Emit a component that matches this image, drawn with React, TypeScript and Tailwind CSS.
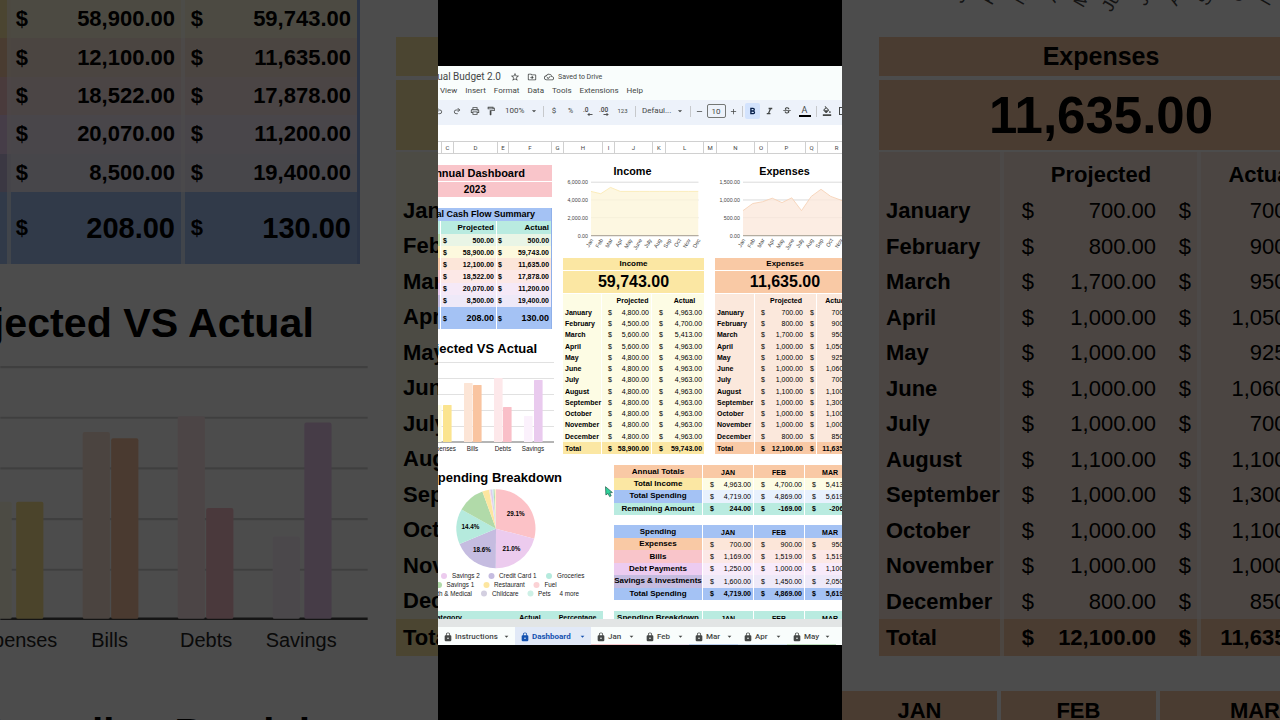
import { Redo2, Undo2 } from 'lucide-react'
import {
  MdAdd, MdArrowDropDown, MdFormatBold, MdFormatColorFill, MdFormatItalic, MdLock, MdOutlineCloudDone,
  MdOutlineDriveFileMove, MdOutlineFormatPaint, MdOutlinePrint, MdRemove, MdStarBorder, MdStrikethroughS,
} from 'react-icons/md'
import clsx from 'clsx'
import type { ReactNode } from 'react'

type Size = 'sm' | 'lg'

const MONTHS = ['January', 'February', 'March', 'April', 'May', 'June', 'July', 'August', 'September', 'October', 'November', 'December']
const SHORT = ['Jan', 'Feb', 'Mar', 'Apr', 'May', 'June', 'July', 'Aug', 'Sep', 'Oct', 'Nov', 'Dec']

const money = (n: number) => n.toLocaleString('en-US', { minimumFractionDigits: 2, maximumFractionDigits: 2 })

interface Ledger {
  title: string
  strong: string
  light: string
  projected: number[]
  actual: number[]
  cols: Record<Size, string[]>
  // column after which the second white divider is drawn
  divider: number
}

const income: Ledger = {
  title: 'Income',
  strong: 'bg-[#fbe7a3]',
  light: 'bg-[#fdfce4]',
  projected: [4800, 4500, 5600, 5600, 4800, 4800, 4800, 4800, 4800, 4800, 4800, 4800],
  actual: [4963, 4700, 5413, 4963, 4963, 4963, 4963, 4963, 4963, 4963, 4963, 4963],
  cols: {
    sm: ['w-[39px]', 'w-[12px]', 'w-[38px]', 'w-[13px]', 'w-[39px]'],
    lg: ['w-[125px]', 'w-[36px]', 'w-[122px]', 'w-[39px]', 'w-[122px]'],
  },
  divider: 2,
}

const expenses: Ledger = {
  title: 'Expenses',
  strong: 'bg-[#f9c9a5]',
  light: 'bg-[#fbe8dc]',
  projected: [700, 800, 1700, 1000, 1000, 1000, 1000, 1100, 1000, 1000, 1000, 800],
  actual: [700, 900, 950, 1050, 925, 1060, 700, 1100, 1300, 1100, 1000, 850],
  cols: {
    sm: ['w-[40px]', 'w-[12px]', 'w-[38px]', 'w-[12px]', 'w-[38px]'],
    lg: ['w-[125px]', 'w-[36px]', 'w-[122px]', 'w-[39px]', 'w-[122px]'],
  },
  divider: 3,
}

const ledgerSizes = {
  sm: {
    table: 'text-[7px]', title: 'h-[13px] text-[8px] border-b', total: 'h-[23px] text-[16px] border-b',
    head: 'h-[13px]', row: 'h-[11px] nth-[4n]:h-[12px]', foot: 'h-[12px]', headText: '',
    name: 'pl-[2px]', amount: 'pr-[2px]', divider: 'border-r border-white',
  },
  lg: {
    table: 'text-[22px]', title: 'h-[43px] text-[25px] border-b-4', total: 'h-[72px] text-[51px] border-b-2',
    head: 'h-[41px]', row: 'h-[36px] even:h-[35px]', foot: 'h-[37px]', headText: 'pt-1',
    name: 'pl-[7px]', amount: 'pr-[6px]', divider: 'border-r-4 border-white/60',
  },
}

const sum = (list: number[]) => list.reduce((a, b) => a + b, 0)

function LedgerTable({ data, size }: { data: Ledger; size: Size }) {
  const s = ledgerSizes[size]
  const line = (i: number) => (i === 0 || i === data.divider) && s.divider

  const cells = (a: number, b: number) =>
    ['$', money(a), '$', money(b)].map((text, i) => (
      <td key={i} className={clsx('text-right', s.amount, line(i + 1))}>{text}</td>
    ))

  return (
    <table className={clsx('table-fixed border-separate border-spacing-0 w-0 leading-none whitespace-nowrap', s.table)}>
      <colgroup>{data.cols[size].map((w, i) => <col key={i} className={w} />)}</colgroup>
      <thead className={data.light}>
        <tr className={data.strong}><th colSpan={5} className={clsx('border-white', s.title)}>{data.title}</th></tr>
        <tr className={data.strong}><th colSpan={5} className={clsx('border-white', s.total)}>{money(sum(data.actual))}</th></tr>
        <tr className={s.head}>
          <th className={clsx(line(0))} />
          <th />
          <th className={clsx(s.headText, line(2))}>Projected</th>
          <th className={clsx(line(3))} />
          <th className={s.headText}>Actual</th>
        </tr>
      </thead>
      <tbody className={data.light}>
        {MONTHS.map((m, i) => (
          <tr key={m} className={s.row}>
            <th className={clsx('text-left', s.name, line(0))}>{m}</th>
            {cells(data.projected[i], data.actual[i])}
          </tr>
        ))}
      </tbody>
      <tfoot className={clsx('font-bold', data.strong)}>
        <tr className={s.foot}>
          <th className={clsx('text-left', s.name, line(0))}>Total</th>
          {cells(sum(data.projected), sum(data.actual))}
        </tr>
      </tfoot>
    </table>
  )
}

// only the leading column of a large ledger, for the narrow strip at the panel's edge
function LedgerNames({ data }: { data: Ledger }) {
  const s = ledgerSizes.lg
  return (
    <ul className={clsx('font-bold leading-none', data.light, s.table)}>
      <li className={clsx('border-white', s.title, data.strong)} />
      <li className={clsx('border-white mb-[41px]', s.total, data.strong)} />
      {MONTHS.map((m) => <li key={m} className="h-[36px] odd:h-[35px] pl-[7px] flex items-center">{m}</li>)}
      <li className={clsx('h-[37px] pl-[7px] flex items-center', data.strong)}>Total</li>
    </ul>
  )
}

const cashFlow = [
  { projected: 500, actual: 500, tag: 'bg-[#b6dba8]', row: 'bg-[#e9f5e6]' },
  { projected: 58900, actual: 59743, tag: 'bg-[#fbe7a3]', row: 'bg-[#fdf9de]' },
  { projected: 12100, actual: 11635, tag: 'bg-[#f9c9a5]', row: 'bg-[#fce6d9]' },
  { projected: 18522, actual: 17878, tag: 'bg-[#f9c5ca]', row: 'bg-[#fce8e6]' },
  { projected: 20070, actual: 11200, tag: 'bg-[#eccbf0]', row: 'bg-[#f5e9f7]' },
  { projected: 8500, actual: 19400, tag: 'bg-[#c5bce0]', row: 'bg-[#eee9f8]' },
]

const flowSizes = {
  sm: {
    table: 'h-[121px] text-[7px] border-r', cols: ['w-[3px]', 'w-[6px]', 'w-[50px]', 'w-[5px]', 'w-[49px]'],
    foot: 'h-[22px]', total: 'text-[9px]', pad: 'pr-[2px]', divider: 'border-r border-white',
  },
  lg: {
    table: 'h-[264px] text-[22px] border-r-[3px]', cols: ['w-[11px]', 'w-[17px]', 'w-[157px]', 'w-[18px]', 'w-[154px]'],
    foot: 'h-[72px]', total: 'text-[29px]', pad: 'pr-[6px]', divider: 'border-r-4 border-white/60',
  },
}

function CashFlowTable({ size }: { size: Size }) {
  const s = flowSizes[size]
  const rows = size === 'sm' ? cashFlow : cashFlow.slice(1)
  return (
    <table className={clsx('table-fixed border-separate border-spacing-0 w-0 leading-none whitespace-nowrap font-bold text-right border-[#8fb0ea]', s.table)}>
      <colgroup>{s.cols.map((w, i) => <col key={i} className={w} />)}</colgroup>
      {size === 'sm' && (
        <thead>
          <tr className="h-[13px] bg-[#a4c2f4] text-[9px]">
            <th colSpan={5}><div className="flex justify-end pr-4">Annual Cash Flow Summary</div></th>
          </tr>
          <tr className="h-[13px] bg-[#b9ebe0] text-[8px]">
            <th className={s.divider} />
            <th colSpan={2} className={clsx('text-right', s.pad, s.divider)}>Projected</th>
            <th colSpan={2} className={clsx('text-right', s.pad)}>Actual</th>
          </tr>
        </thead>
      )}
      <tbody>
        {rows.map((r) => (
          <tr key={r.projected} className={r.row}>
            <td className={clsx(r.tag, s.divider)} />
            <td>$</td>
            <td className={clsx(s.pad, s.divider)}>{money(r.projected)}</td>
            <td>$</td>
            <td className={s.pad}>{money(r.actual)}</td>
          </tr>
        ))}
      </tbody>
      <tfoot className="bg-[#a4c2f4]">
        <tr className={s.foot}>
          <td className={s.divider} />
          <td>$</td>
          <td className={clsx(s.total, s.pad, s.divider)}>208.00</td>
          <td>$</td>
          <td className={clsx(s.total, s.pad)}>130.00</td>
        </tr>
      </tfoot>
    </table>
  )
}

const bars = [
  { x: -5, top: 76, fill: '#fdfce4' }, { x: 5, top: 76, fill: '#fbe48f' },
  { x: 26, top: 54, fill: '#fce5d6' }, { x: 35, top: 56, fill: '#f9c4a0' },
  { x: 56, top: 49, fill: '#fde8ea' }, { x: 65, top: 78, fill: '#f9bfc8' },
  { x: 86, top: 87, fill: '#fbf1fc' }, { x: 96, top: 51, fill: '#e9caee' },
]

function ProjectedChart({ className }: { className: string }) {
  return (
    <svg viewBox="0 0 116 126" className={className} role="img" aria-label="Projected VS Actual">
      <text x="99" y="24" textAnchor="end" fontSize="13" fontWeight="700">Projected VS Actual</text>
      {[33, 49, 65, 81, 97].map((y) => <path key={y} d={`M0 ${y + 0.5}H116`} stroke="#d4d4d4" strokeWidth=".7" />)}
      <path d="M0 113H116" stroke="#444" strokeWidth=".8" />
      {bars.map((b) => <rect key={b.x} x={b.x} y={b.top} width="8.6" height={113 - b.top} rx=".6" fill={b.fill} />)}
      <g fontSize="6.3" fill="#222" textAnchor="middle">
        <text x="18" y="122" textAnchor="end">Expenses</text>
        <text x="34.5" y="122">Bills</text>
        <text x="65" y="122">Debts</text>
        <text x="95" y="122">Savings</text>
      </g>
    </svg>
  )
}

interface AreaProps {
  title: string
  values: number[]
  max: number
  ticks: number[]
  line: string
  fill: string
}

const monthX = (i: number) => 28 + i * 9.75

function MonthAxis() {
  return (
    <g textAnchor="end" fontSize="5.5" fill="#444">
      {SHORT.map((m, i) => <text key={m} transform={`translate(${monthX(i) + 2.5} 86) rotate(-60)`}>{m}</text>)}
    </g>
  )
}

function AreaChart({ title, values, max, ticks, line, fill }: AreaProps) {
  const py = (v: number) => 81.5 - (v / max) * 53.3
  const top = values.map((v, i) => `${monthX(i)},${py(v)}`).join(' ')
  return (
    <svg viewBox="0 0 141 104" className="w-[141px] h-[104px]" role="img" aria-label={title}>
      <text x="69.5" y="21" textAnchor="middle" fontSize="10.8" fontWeight="700">{title}</text>
      {ticks.map((t) => (
        <g key={t}>
          <path d={`M28 ${py(t)}H135.5`} stroke="#ccc" strokeWidth=".7" />
          <text x="25" y={py(t) + 2} textAnchor="end" fontSize="5.3" fill="#444">{money(t)}</text>
        </g>
      ))}
      <polygon points={`28,81.5 ${top} 135.25,81.5`} fill={fill} fillOpacity=".8" />
      <polyline points={top} fill="none" stroke={line} strokeWidth=".9" />
      <path d="M28 81.7H135.5" stroke="#b3aca0" strokeWidth="1.2" />
      <MonthAxis />
    </svg>
  )
}

const incomeChart = { title: 'Income', values: income.actual, max: 6000, ticks: [6000, 4000, 2000, 0], line: '#fbeab5', fill: '#fdf5da' }
const expenseChart = { title: 'Expenses', values: expenses.actual, max: 1500, ticks: [1500, 1000, 500, 0], line: '#f6d3b8', fill: '#fbe9dc' }

const slices = [
  { to: 29.1, fill: '#fcc2c7' }, { to: 50.1, fill: '#eccbee' }, { to: 68.7, fill: '#c5bce0' },
  { to: 83.1, fill: '#b5eadd' }, { to: 94.4, fill: '#b1daa9' }, { to: 97.2, fill: '#fde6a0' },
  { to: 97.7, fill: '#fbdfe0' }, { to: 98.5, fill: '#dccdec' }, { to: 99, fill: '#cfe8f3' },
  { to: 99.5, fill: '#b7dcb0' }, { to: 100, fill: '#fdf0c8' },
]

const legend = [
  { dot: 6, x: 14, y: 121, fill: '#eccbee', text: 'Savings 2' },
  { dot: 53.5, x: 61, y: 121, fill: '#c5bce0', text: 'Credit Card 1' },
  { dot: 111, x: 119, y: 121, fill: '#b5eadd', text: 'Groceries' },
  { dot: 1, x: 8.5, y: 130, fill: '#b1daa9', text: 'Savings 1' },
  { dot: 48.5, x: 56, y: 130, fill: '#fde6a0', text: 'Restaurant' },
  { dot: 98.5, x: 106.5, y: 130, fill: '#fbd2d5', text: 'Fuel' },
  { dot: 46, x: 54, y: 138.5, fill: '#d3cfe0', text: 'Childcare' },
  { dot: 92.5, x: 100, y: 138.5, fill: '#cdf0e6', text: 'Pets' },
]

function PieChart() {
  const at = (p: number) => {
    const a = (p / 100) * Math.PI * 2
    return `${58 + 39.5 * Math.sin(a)} ${73.7 - 39.5 * Math.cos(a)}`
  }
  return (
    <svg viewBox="0 0 165 156" className="w-[165px] h-[156px]" role="img" aria-label="Spending Breakdown">
      <text x="124" y="27" textAnchor="end" fontSize="13" fontWeight="700">Spending Breakdown</text>
      {slices.map((s, i) => (
        <path key={s.to} fill={s.fill} d={`M58 73.7L${at(i ? slices[i - 1].to : 0)}A39.5 39.5 0 0 1 ${at(s.to)}Z`} />
      ))}
      <g fontSize="6.3" fontWeight="700" textAnchor="middle">
        <text x="77.7" y="61">29.1%</text>
        <text x="73.5" y="96">21.0%</text>
        <text x="44" y="97">18.6%</text>
        <text x="32.5" y="74">14.4%</text>
      </g>
      <g fontSize="6.3" fill="#222">
        {legend.map((l) => (
          <g key={l.text}>
            <circle cx={l.dot} cy={l.y} r="3" fill={l.fill} />
            <text x={l.x} y={l.y + 2.2}>{l.text}</text>
          </g>
        ))}
        <text x="34" y="140.7" textAnchor="end">Health & Medical</text>
        <text x="121.5" y="140.7">4 more</text>
      </g>
    </svg>
  )
}

interface TotalRow {
  label: string
  tag: string
  row: string
  values: number[]
  bold?: boolean
}

const annualTotals: TotalRow[] = [
  { label: 'Total Income', tag: 'bg-[#fbe7a3]', row: 'bg-[#fdfce4]', values: [4963, 4700, 5413] },
  { label: 'Total Spending', tag: 'bg-[#a4c2f4]', row: 'bg-[#e8f1fd]', values: [4719, 4869, 5619] },
  { label: 'Remaining Amount', tag: 'bg-[#b9ebe0]', row: 'bg-[#b9ebe0]', values: [244, -169, -206], bold: true },
]

const spendingTotals: TotalRow[] = [
  { label: 'Expenses', tag: 'bg-[#f9c9a5]', row: 'bg-[#fce6d9]', values: [700, 900, 950] },
  { label: 'Bills', tag: 'bg-[#f9c5ca]', row: 'bg-[#fce8e6]', values: [1169, 1519, 1519] },
  { label: 'Debt Payments', tag: 'bg-[#eccbf0]', row: 'bg-[#f8ebfa]', values: [1250, 1000, 1100] },
  { label: 'Savings & Investments', tag: 'bg-[#c5bce0]', row: 'bg-[#eee9f8]', values: [1600, 1450, 2050] },
  { label: 'Total Spending', tag: 'bg-[#a4c2f4]', row: 'bg-[#a4c2f4]', values: [4719, 4869, 5619], bold: true },
]

function TotalsTable({ title, head, rows, className }: { title: string; head: string; rows: TotalRow[]; className: string }) {
  return (
    <table className={clsx('table-fixed border-separate border-spacing-0 w-0 leading-none whitespace-nowrap text-[7px]', className)}>
      <colgroup>
        <col className="w-[89px]" />
        {[0, 1, 2].map((i) => [<col key={`s${i}`} className="w-[13px]" />, <col key={`a${i}`} className="w-[38px]" />])}
      </colgroup>
      <thead className={head}>
        <tr className="h-[13px]">
          <th className="text-[8px] border-r border-white">{title}</th>
          {['JAN', 'FEB', 'MAR'].map((m) => <th key={m} colSpan={2} className="pt-px border-r border-white">{m}</th>)}
        </tr>
      </thead>
      <tbody>
        {rows.map((r) => (
          <tr key={r.label} className={clsx('text-right', r.row, r.bold && 'font-bold')}>
            <th className={clsx('text-[8px] text-center border-r border-white', r.tag)}>{r.label}</th>
            {r.values.map((v, i) => [
              <td key={`s${i}`} className="pr-[2px]">$</td>,
              <td key={`a${i}`} className="pr-[2px] border-r border-white">{money(v)}</td>,
            ])}
          </tr>
        ))}
      </tbody>
    </table>
  )
}

function Tool({ label, w, children }: { label: string; w: string; children: ReactNode }) {
  return (
    <button aria-label={label} className={clsx('h-4 shrink-0 flex items-center justify-center rounded-[2px]', w)}>
      {children}
    </button>
  )
}

function Rule({ w }: { w: string }) {
  return <span className={clsx('shrink-0 flex justify-center', w)}><i className="w-px h-[11px] bg-[#c7c9cc]" /></span>
}

// "decrease / increase decimal places" glyph
function Decimals({ text, more }: { text: string; more?: boolean }) {
  return (
    <svg viewBox="0 0 11 11" className="w-[11px] h-[11px]">
      <text x="0" y="5.5" fontSize="6.5" fontWeight="500" fill="#444">{text}</text>
      <path d={more ? 'M4.5 8.5H9M7.5 7L9 8.5L7.5 10' : 'M9.5 8.5H5M6.5 7L5 8.5L6.5 10'} stroke="#444" strokeWidth=".9" fill="none" />
    </svg>
  )
}

function Toolbar() {
  return (
    <div className="h-[25px] bg-[#edf2fa] flex items-center text-[8px] text-[#444746] overflow-hidden pb-[3px]">
      <Tool label="Undo" w="w-[18px] -ml-2"><Undo2 className="size-[8px]" strokeWidth={2.5} /></Tool>
      <Tool label="Redo" w="w-[18px]"><Redo2 className="size-[8px]" strokeWidth={2.5} /></Tool>
      <Tool label="Print" w="w-[17px]"><MdOutlinePrint className="size-[10px]" /></Tool>
      <Tool label="Paint format" w="w-[16px]"><MdOutlineFormatPaint className="size-[10px]" /></Tool>
      <select aria-label="Zoom" className="appearance-none w-[30px] pl-[6px] shrink-0 h-4">
        <option>100%</option>
      </select>
      <MdArrowDropDown className="size-[10px] shrink-0" />
      <Rule w="w-[8px]" />
      <Tool label="Currency" w="w-[14px]">$</Tool>
      <Tool label="Percent" w="w-[19px]"><span className="text-[7px]">%</span></Tool>
      <Tool label="Decrease decimal places" w="w-[16px]"><Decimals text=".0" /></Tool>
      <Tool label="Increase decimal places" w="w-[17px]"><Decimals text=".00" more /></Tool>
      <Tool label="More formats" w="w-[19px]"><span className="text-[6px] leading-none">123</span></Tool>
      <Rule w="w-[6px]" />
      <select aria-label="Font" className="appearance-none w-[36px] pl-[4px] shrink-0 h-4">
        <option>Defaul...</option>
      </select>
      <MdArrowDropDown className="w-[12px] h-[10px] shrink-0" />
      <Rule w="w-[8px]" />
      <Tool label="Smaller" w="w-[10px]"><MdRemove className="size-[9px]" /></Tool>
      <span className="w-[24px] shrink-0 flex justify-center">
        <input aria-label="Font size" defaultValue="10" className="w-[19px] h-[14px] border border-[#747775] rounded-[2px] text-center" />
      </span>
      <Tool label="Larger" w="w-[11px]"><MdAdd className="size-[9px]" /></Tool>
      <Rule w="w-[6px]" />
      <Tool label="Bold" w="w-[15px] bg-[#d3e3fd] text-[#041e49]"><MdFormatBold className="size-[11px]" /></Tool>
      <Tool label="Italic" w="w-[19px]"><MdFormatItalic className="size-[11px]" /></Tool>
      <Tool label="Strikethrough" w="w-[16px]"><MdStrikethroughS className="size-[10px]" /></Tool>
      <Tool label="Text color" w="w-[19px]">
        <span className="w-3 h-[12px] text-[9px] leading-[10px] border-b-2 border-black">A</span>
      </Tool>
      <Rule w="w-[4px]" />
      <Tool label="Fill color" w="w-[17px]"><MdFormatColorFill className="size-[10px]" /></Tool>
      <Tool label="Borders" w="w-[16px]"><i className="size-[8px] border border-[#444746]" /></Tool>
    </div>
  )
}

const columns = [
  ['C', 'w-[12px]'], ['D', 'w-[44px]'], ['E', 'w-[11px]'], ['F', 'w-[43px]'], ['G', 'w-[12px]'], ['H', 'w-[39px]'],
  ['I', 'w-[12px]'], ['J', 'w-[38px]'], ['K', 'w-[13px]'], ['L', 'w-[38px]'], ['M', 'w-[13px]'], ['N', 'w-[38px]'],
  ['O', 'w-[13px]'], ['P', 'w-[38px]'], ['Q', 'w-[12px]'], ['R', 'w-[38px]'],
]

const tabs = [
  { name: 'Instructions', w: 'w-[77px]', line: 'border-transparent' },
  { name: 'Dashboard', w: 'w-[76px]', line: 'border-transparent', active: true },
  { name: 'Jan', w: 'w-[49px]', line: 'border-[#f4c7cb]' },
  { name: 'Feb', w: 'w-[49px]', line: 'border-[#e6dcec]' },
  { name: 'Mar', w: 'w-[49px]', line: 'border-[#b9cdec]' },
  { name: 'Apr', w: 'w-[49px]', line: 'border-[#cfe0f0]' },
  { name: 'May', w: 'w-[49px]', line: 'border-[#bfdfc0]' },
]

function Sheet() {
  return (
    <main className="relative flex-1 min-h-0 overflow-hidden bg-white text-black">
      <div className="flex gap-[11px] h-[301px]">
        <section className="w-[114px] shrink-0 pt-[11px]">
          <h1 className="h-4 bg-[#f9c5ca] flex items-center justify-end pr-[27px] text-[11px] font-bold whitespace-nowrap">Annual Dashboard</h1>
          <p className="h-[15px] mt-px mb-[11px] bg-[#f9c5ca] flex items-center justify-end pr-[66px] text-[10px] font-bold">2023</p>
          <CashFlowTable size="sm" />
          <ProjectedChart className="w-[116px] max-w-none h-[126px]" />
        </section>
        <section className="w-[141px] shrink-0">
          <AreaChart {...incomeChart} />
          <LedgerTable data={income} size="sm" />
        </section>
        <section className="shrink-0">
          <AreaChart {...expenseChart} />
          <LedgerTable data={expenses} size="sm" />
        </section>
      </div>
      <div className="flex gap-[11px]">
        <section className="w-[165px] shrink-0">
          <PieChart />
          <table className="table-fixed w-full h-[13px] leading-none text-[7px] bg-[#b9ebe0]">
            <thead>
              <tr>
                <th className="w-[70px]"><div className="flex justify-end pr-[46px]">Category</div></th>
                <th className="w-[44px]">Actual</th>
                <th>Percentage</th>
              </tr>
            </thead>
          </table>
        </section>
        <section className="pt-[10px]">
          <TotalsTable title="Annual Totals" head="bg-[#f9c9a5]" rows={annualTotals} className="h-[50px] mb-[10px]" />
          <TotalsTable title="Spending" head="bg-[#a4c2f4]" rows={spendingTotals} className="h-[75px] mb-[11px]" />
          <TotalsTable title="Spending Breakdown" head="bg-[#b9ebe0]" rows={[]} className="h-[13px]" />
        </section>
      </div>
      {/* mouse pointer */}
      <svg viewBox="0 0 8 12" className="absolute left-[167px] top-[332px] w-[8px] h-[12px]">
        <path d="M.5 .7L.9 9L3 7.4L4.6 10.6L6.2 9.8L4.8 6.8L7.4 6.5Z" fill="#2fd39b" stroke="#1f5a49" strokeWidth=".7" />
      </svg>
    </main>
  )
}

function Phone() {
  return (
    <div className="w-[404px] shrink-0 bg-black flex flex-col pt-[66px] pb-[75px] overflow-hidden">
      <header className="shrink-0 bg-[#f9fdfc] font-[Roboto,sans-serif] text-[#444746] whitespace-nowrap">
        <div className="h-[18px] pt-[4px] flex items-center">
          <div className="w-[63px] flex justify-end overflow-hidden text-[10px] leading-[14px]">Annual Budget 2.0</div>
          <button aria-label="Star" className="ml-[9px]"><MdStarBorder className="size-[10px]" /></button>
          <button aria-label="Move" className="ml-[7px]"><MdOutlineDriveFileMove className="size-[10px]" /></button>
          <MdOutlineCloudDone className="size-[10px] ml-[7px]" />
          <span className="ml-1 text-[7px]">Saved to Drive</span>
        </div>
        <nav className="h-4 pl-[2px] pb-[2px] flex items-center gap-[8px] text-[8px]">
          {['View', 'Insert', 'Format', 'Data', 'Tools', 'Extensions', 'Help'].map((m) => <button key={m}>{m}</button>)}
        </nav>
        <Toolbar />
        <div className="h-4 bg-white" />
        <div className="h-[13px] pl-[3px] flex bg-white border-y border-[#d0d0d0] text-[6px] leading-[11px] text-center text-[#444]">
          {columns.map(([c, w]) => <span key={c} className={clsx('shrink-0 border-l border-[#d0d0d0]', w)}>{c}</span>)}
        </div>
      </header>
      <Sheet />
      <div className="h-2 shrink-0 bg-[#e2e5e5]" />
      <footer className="h-[18px] shrink-0 flex bg-[#f9fdfc] font-[Roboto,sans-serif] font-medium text-[8px] text-[#444746]">
        {tabs.map((t) => (
          <button
            key={t.name}
            className={clsx('h-full shrink-0 flex items-center gap-[2px] pt-[2px] pl-[5px] pr-[4px] border-b', t.w, t.line, t.active && 'bg-[#e1e9f7] text-[#1452b0] font-bold')}
          >
            <MdLock className="size-[10px]" />
            {t.name}
            <MdArrowDropDown className="size-[9px] ml-auto" />
          </button>
        ))}
      </footer>
    </div>
  )
}

export default function App() {
  return (
    <div className="h-screen flex overflow-hidden bg-white text-black font-['Liberation_Sans',Arial,sans-serif]">
      <aside className="relative flex-1 min-w-0 overflow-hidden">
        <div className="flex gap-9">
          <div className="w-[360px] shrink-0">
            <CashFlowTable size="lg" />
            <ProjectedChart className="w-[368px] max-w-none h-[399px] -mt-[3px]" />
            <h2 className="h-[100px] pt-[50px] flex justify-end text-[40px] leading-[46px] font-bold whitespace-nowrap -mr-[30px]">Spending Breakdown</h2>
          </div>
          <div className="pt-[37px] flex-1 min-w-0 overflow-hidden"><LedgerNames data={income} /></div>
        </div>
        <div className="absolute inset-0 bg-black/70" />
      </aside>
      <Phone />
      <aside className="relative flex-1 min-w-0 overflow-hidden">
        <div className="pl-[37px]">
          <svg viewBox="0 92.3 141 11.7" className="w-[447px] max-w-none h-[37px]" aria-hidden="true"><MonthAxis /></svg>
          <LedgerTable data={expenses} size="lg" />
        </div>
        <div className="mt-[35px] flex gap-1 text-[22px] font-bold text-center leading-[40px]">
          <span className="w-[159px] bg-[#f9c9a5]">JAN</span>
          <span className="w-[159px] bg-[#f9c9a5]">FEB</span>
          <span className="flex-1 pl-[70px] text-left bg-[#f9c9a5]">MAR</span>
        </div>
        <div className="absolute inset-0 bg-black/70" />
      </aside>
    </div>
  )
}
